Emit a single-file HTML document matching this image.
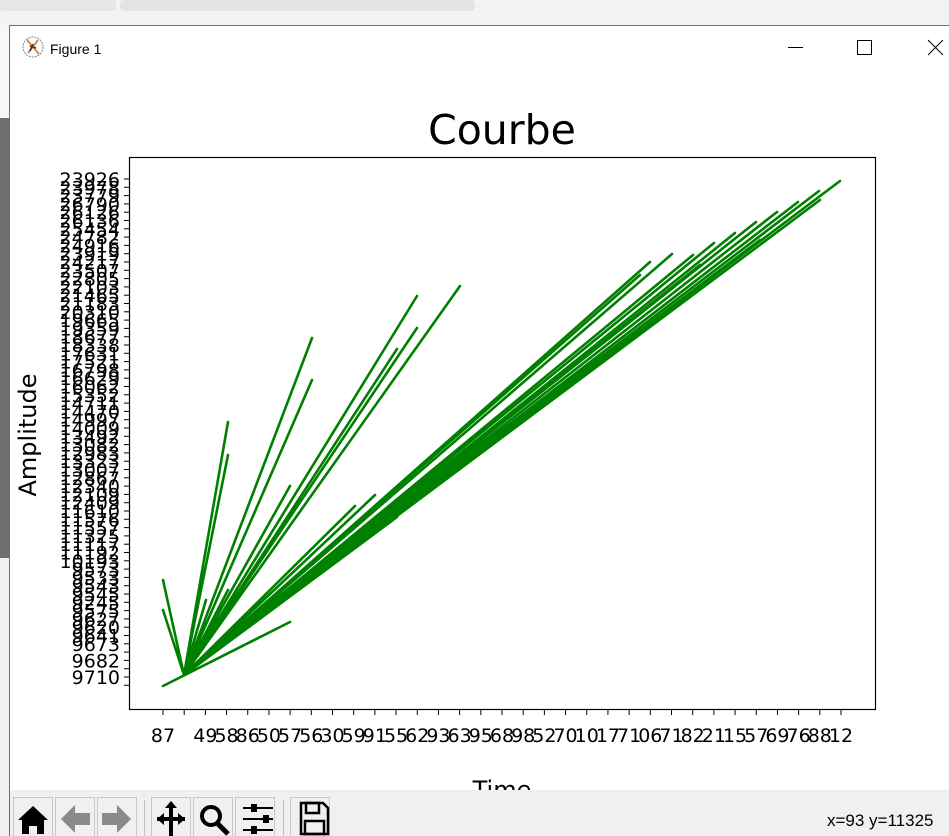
<!DOCTYPE html>
<html><head><meta charset="utf-8"><style>
body{margin:0;width:949px;height:836px;overflow:hidden;background:#f0f0f0;position:relative;font-family:"Liberation Sans",sans-serif}
</style></head><body>
<svg width="949" height="836" style="position:absolute;left:0;top:0" font-family="DejaVu Sans, Liberation Sans, sans-serif">
<rect x="0" y="0" width="949" height="25" fill="#f3f3f3"/>
<rect x="0" y="0" width="116" height="11" fill="#e6e6e6" rx="3"/>
<rect x="120" y="0" width="355" height="11" fill="#e4e4e4" rx="4"/>
<rect x="0" y="118" width="10" height="440" fill="#6e6e6e"/>
<rect x="0" y="25" width="10" height="93" fill="#f7f7f7"/>
<rect x="9.5" y="25.5" width="945" height="820" fill="#fff" stroke="#707070"/>
<circle cx="33" cy="47" r="10" fill="#fff" stroke="#6a8aa0" stroke-dasharray="2 1"/>
<path d="M27 40 L39 54 M38 40 L28 53" stroke="#f08040" stroke-width="2"/>
<path d="M33 44 l-3 7 M30 46 l6 2" stroke="#333" stroke-width="1.5"/>
<text x="50" y="54" font-family="Liberation Sans, sans-serif" font-size="14" fill="#000">Figure 1</text>
<line x1="788" y1="47.5" x2="803" y2="47.5" stroke="#000"/>
<rect x="857.5" y="40.5" width="14" height="14" fill="none" stroke="#000"/>
<path d="M928 40 L943 55 M943 40 L928 55" stroke="#000"/>
<text x="502" y="144" font-size="41" text-anchor="middle" fill="#000">Courbe</text>
<rect x="129.5" y="157.5" width="746" height="552" fill="none" stroke="#000" stroke-width="1.2"/>
<g id="yt" stroke="#000" stroke-width="1"></g>
<g id="xt" stroke="#000" stroke-width="1"></g>
<text transform="translate(36,435) rotate(-90)" font-size="24" text-anchor="middle" fill="#000">Amplitude</text>
<text x="502" y="798" font-size="24" text-anchor="middle" fill="#000">Time</text>
<g stroke="#008000" stroke-width="2.6" fill="none" stroke-linecap="round">
<path d="M163 686 L290 622"/>
<path d="M163 580 L184 675 L163 610"/>
<path d="M184 675 L228 422 M184 675 L228 455 M184 675 L312 338 M184 675 L312 380 M184 675 L417 296 M184 675 L417 328 M184 675 L460 286 M184 675 L397 349 M184 675 L290 486 M184 675 L355 506 M184 675 L375 495 M184 675 L397 517 M184 675 L206 600 M184 675 L228 590"/>
<path d="M184 675 L650 262 M184 675 L672 254 M184 675 L693 255 M184 675 L714 243 M184 675 L735 233 M184 675 L756 222 M184 675 L777 212 M184 675 L798 202 M184 675 L819 191 M184 675 L840 181"/>
<path d="M184 675 L640 275 M184 675 L700 265 M184 675 L760 240 M184 675 L820 200"/>
</g>
<rect x="10" y="790" width="939" height="46" fill="#f0f0f0"/>
<g fill="#f0f0f0" stroke="#c8c8c8">
<rect x="13.5" y="797.5" width="39" height="40"/><rect x="55.5" y="797.5" width="39" height="40"/><rect x="97.5" y="797.5" width="39" height="40"/>
<rect x="151.5" y="797.5" width="39" height="40"/><rect x="193.5" y="797.5" width="39" height="40"/><rect x="235.5" y="797.5" width="39" height="40"/>
<rect x="290.5" y="797.5" width="39" height="40"/>
</g>
<line x1="144.5" y1="800" x2="144.5" y2="836" stroke="#c0c0c0"/>
<line x1="283.5" y1="800" x2="283.5" y2="836" stroke="#c0c0c0"/>
<path d="M18 820 L33 806 L48 820 L44 820 L44 834 L37 834 L37 826 L29 826 L29 834 L22 834 L22 820 Z" fill="#000"/>
<path d="M61 819 L75 805 L75 813 L90 813 L90 825 L75 825 L75 833 Z" fill="#8a8a8a"/>
<path d="M131 819 L117 805 L117 813 L102 813 L102 825 L117 825 L117 833 Z" fill="#8a8a8a"/>
<path d="M171 803 V836 M157 819 H185" stroke="#000" stroke-width="4"/>
<path d="M171 801 l-6 7 h12 Z M157 819 l7 -6 v12 Z M185 819 l-7 -6 v12 Z" fill="#000"/>
<circle cx="211" cy="816" r="9" fill="none" stroke="#000" stroke-width="4"/>
<path d="M217 823 L228 834" stroke="#000" stroke-width="5"/>
<path d="M243 808 H273 M243 819 H273 M243 830 H273" stroke="#000" stroke-width="2"/>
<rect x="251" y="804" width="6" height="8" fill="#000"/><rect x="263" y="815" width="6" height="8" fill="#000"/><rect x="251" y="826" width="6" height="8" fill="#000"/>
<path d="M301 803 H323 L328 808 V834 H301 Z" fill="none" stroke="#000" stroke-width="2.5"/>
<rect x="306" y="803" width="13" height="10" fill="none" stroke="#000" stroke-width="2.5"/>
<rect x="305" y="821" width="19" height="13" fill="none" stroke="#000" stroke-width="2.5"/>
<text x="827" y="826" font-family="Liberation Sans, sans-serif" font-size="17" fill="#000">x=93 y=11325</text>
</svg>
<script>
var ns="http://www.w3.org/2000/svg";
var yl=["23926","23978","23779","26790","26126","26136","25454","24782","24916","23919","24217","23507","22805","22103","21465","21183","20310","19665","19359","18677","18338","17631","17521","16798","16629","16062","15352","14711","14470","14997","14009","13492","13082","12983","13323","13007","12867","12340","12109","12409","11610","11576","11557","11325","11117","11192","10193","9573","9533","9543","9545","9245","9575","9627","9620","9641","9673","","9682","","9710",""];
var yt=document.getElementById("yt");
for(var i=0;i<yl.length;i++){var y=179+i*8.3;
var l=document.createElementNS(ns,"line");l.setAttribute("x1",124);l.setAttribute("x2",129);l.setAttribute("y1",y);l.setAttribute("y2",y);yt.appendChild(l);
if(!yl[i])continue;
var t=document.createElementNS(ns,"text");t.setAttribute("x",120);t.setAttribute("y",y+7);t.setAttribute("font-size","19");t.setAttribute("text-anchor","end");t.setAttribute("stroke","none");t.setAttribute("fill","#000");t.textContent=yl[i];yt.appendChild(t);}
var xl=["87","","49","58","86","50","57","56","30","59","91","55","62","93","63","95","68","98","52","70","10","17","71","06","71","82","21","15","57","69","76","88","12","17","73","79"];
var xt=document.getElementById("xt");var n=33;
for(var i=0;i<n;i++){var x=163+i*(841-163)/(n-1);
var l=document.createElementNS(ns,"line");l.setAttribute("x1",x);l.setAttribute("x2",x);l.setAttribute("y1",710);l.setAttribute("y2",715);xt.appendChild(l);
var lab=xl[i]||"";if(!lab)continue;
var t=document.createElementNS(ns,"text");t.setAttribute("x",x);t.setAttribute("y",742);t.setAttribute("font-size","19");t.setAttribute("text-anchor","middle");t.setAttribute("stroke","none");t.setAttribute("fill","#000");t.textContent=lab;xt.appendChild(t);}
</script>
</body></html>
